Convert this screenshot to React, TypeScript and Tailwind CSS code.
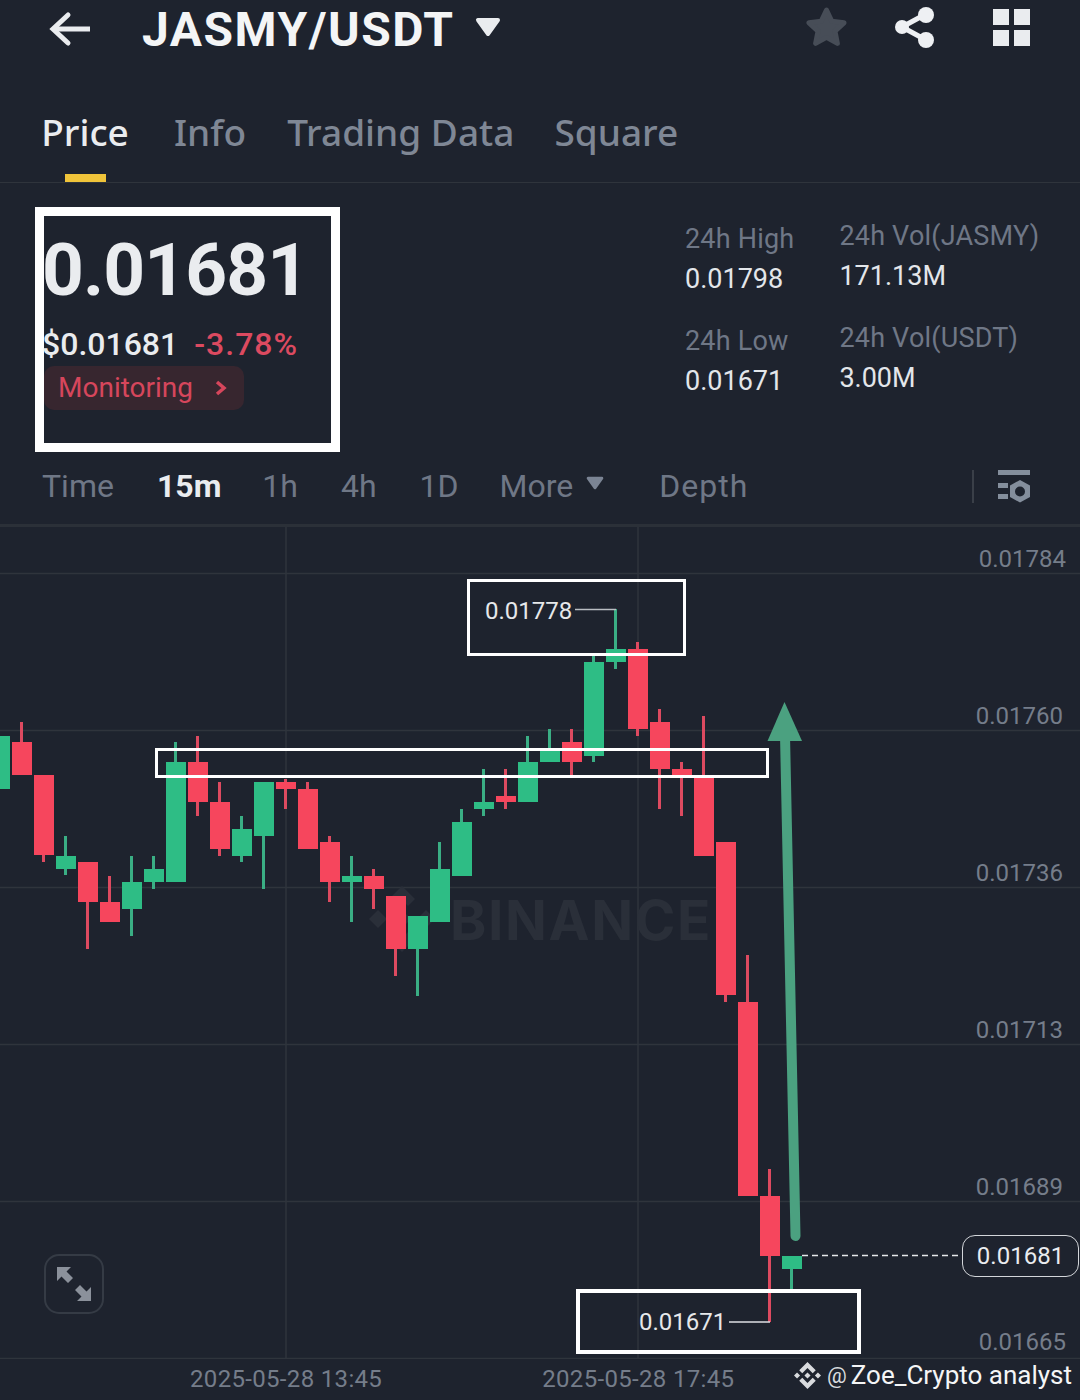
import React from 'react';
import { SiBinance } from 'react-icons/si';

type Candle = [number, number, number, number, number, 'g' | 'r'];

// x, wick top, body top, body bottom, wick bottom, colour (page pixels)
const candles: Candle[] = [
  [0, 736, 736, 789, 789, 'g'],
  [22, 722, 742, 775, 775, 'r'],
  [44, 775, 775, 855, 862, 'r'],
  [66, 836, 856, 869, 875, 'g'],
  [88, 862, 862, 902, 949, 'r'],
  [110, 876, 902, 922, 922, 'r'],
  [132, 856, 882, 909, 936, 'g'],
  [154, 856, 869, 882, 889, 'g'],
  [176, 742, 762, 882, 882, 'g'],
  [198, 736, 762, 802, 816, 'r'],
  [220, 782, 802, 849, 856, 'r'],
  [242, 816, 829, 856, 862, 'g'],
  [264, 782, 782, 836, 889, 'g'],
  [286, 779, 782, 789, 809, 'r'],
  [308, 782, 789, 849, 849, 'r'],
  [330, 836, 842, 882, 902, 'r'],
  [352, 856, 876, 882, 922, 'g'],
  [374, 869, 876, 889, 909, 'r'],
  [396, 896, 896, 949, 976, 'r'],
  [418, 916, 916, 949, 996, 'g'],
  [440, 842, 869, 922, 922, 'g'],
  [462, 809, 822, 876, 876, 'g'],
  [484, 769, 802, 809, 816, 'g'],
  [506, 769, 796, 802, 809, 'r'],
  [528, 736, 762, 802, 802, 'g'],
  [550, 729, 749, 762, 762, 'g'],
  [572, 729, 742, 762, 776, 'r'],
  [594, 656, 662, 756, 762, 'g'],
  [616, 609, 649, 662, 669, 'g'],
  [638, 642, 649, 729, 736, 'r'],
  [660, 709, 722, 769, 809, 'r'],
  [682, 762, 769, 776, 816, 'r'],
  [704, 716, 776, 856, 856, 'r'],
  [726, 842, 842, 995, 1002, 'r'],
  [748, 955, 1002, 1196, 1196, 'r'],
  [770, 1169, 1196, 1256, 1322, 'r'],
  [792, 1256, 1256, 1269, 1289, 'g'],
];

const gridY = [573, 730, 887, 1044, 1201, 1358];
const axisLabels = ['0.01784', '0.01760', '0.01736', '0.01713', '0.01689', '0.01665'];

const roboto = { fontFamily: 'Roboto, "Noto Sans", sans-serif' };

const Caret = ({ w, h, color }: { w: number; h: number; color: string }) => (
  <svg width={w} height={h} viewBox="0 0 26 20">
    <path d="M3 3 H23 L13 17 Z" fill={color} stroke={color} strokeWidth="4" strokeLinejoin="round" />
  </svg>
);

const Header = () => (
  <div className="flex h-[60px] items-center pl-[48px] pr-[50px]">
    <svg width="43" height="36" viewBox="0 0 43 36" className="mb-[2px] mr-[51px]" fill="none" stroke="#eaecef" strokeWidth="5">
      <path d="M42 18 H6" />
      <path d="M20 4 L5 18 L20 32" strokeLinecap="round" />
    </svg>
    <span className="text-[48px] font-bold tracking-[1.5px] text-[#f4f5f6]">JASMY/USDT</span>
    <span className="mb-[6px] ml-[20px] flex">
      <Caret w={26} h={20} color="#eaecef" />
    </span>
    <svg width="41" height="41" viewBox="0 0 41 41" className="mb-[5px] ml-auto">
      <path
        d="M20.5 3 L25.8 14.2 L38 15.8 L29 24.2 L31.4 36.4 L20.5 30.4 L9.6 36.4 L12 24.2 L3 15.8 L15.2 14.2 Z"
        fill="#474d57"
        stroke="#474d57"
        strokeWidth="5"
        strokeLinejoin="round"
      />
    </svg>
    <svg width="40" height="42" viewBox="0 0 40 42" className="mb-[6px] ml-[48px]" fill="#eef0f3">
      <path d="M7 21 L31 8 M7 21 L31 34" stroke="#eef0f3" strokeWidth="5" />
      <circle cx="7" cy="21" r="7" />
      <circle cx="31" cy="9" r="8" />
      <circle cx="31" cy="34" r="8" />
    </svg>
    <svg width="37" height="37" viewBox="0 0 37 37" className="mb-[6px] ml-[58px]" fill="#eaecef">
      <rect x="0" y="0" width="16" height="16" />
      <rect x="21" y="0" width="16" height="16" />
      <rect x="0" y="21" width="16" height="16" />
      <rect x="21" y="21" width="16" height="16" />
    </svg>
  </div>
);

const Tabs = () => (
  <div className="mt-[40px] flex h-[83px] border-b border-[#2f343c] pl-[41px] font-['Noto_Sans'] text-[37px] leading-[64px] font-medium text-[#7f8795]">
    <div className="flex w-[88px] flex-col items-center">
      <span className="h-[74px] text-[#eaecef]">Price</span>
      <div className="h-[8px] w-[41px] bg-[#f0c43a]" />
    </div>
    <span className="ml-[45px]">Info</span>
    <span className="ml-[41px]">Trading Data</span>
    <span className="ml-[40px]">Square</span>
  </div>
);

const StatColumn = ({ rows }: { rows: [string, string][] }) => (
  <div className="flex flex-col gap-[23px]">
    {rows.map(([label, value]) => (
      <div key={label} className="flex flex-col">
        <span className="h-[40px] text-[27px] leading-[40px] tracking-[0.2px] text-[#6f7786]">{label}</span>
        <span className="h-[39px] text-[27px] leading-[40px] text-[#e3e6ea]">{value}</span>
      </div>
    ))}
  </div>
);

const Stats = () => (
  <div className="flex h-[269px] pt-[24px]">
    <div className="ml-[35px] h-[245px] w-[305px] border-[9px] border-white">
      <div className="-ml-[2px] mt-[9px] text-[73px] leading-[90px] font-bold tracking-[-0.9px] text-[#eaecef]">0.01681</div>
      <div className="-ml-[2px] mt-[8px] flex gap-[16px] leading-[42px]">
        <span className="text-[32px] font-medium text-[#eaecef]">$0.01681</span>
        <span className="text-[32px] font-medium tracking-[1px] text-[#dc4a60]">-3.78%</span>
      </div>
      <div className="mt-[1px] flex h-[44px] w-[200px] items-center rounded-[10px] bg-[#37262f] pl-[14px] text-[28px] text-[#d6465c]">
        <span>Monitoring</span>
        <svg width="12" height="16" viewBox="0 0 12 16" className="ml-[22px]" fill="none" stroke="#d6465c" strokeWidth="3.5">
          <path d="M2 2 L9 8 L2 14" />
        </svg>
      </div>
    </div>
    <div className="ml-[345px] pt-[12px]">
      <StatColumn rows={[['24h High', '0.01798'], ['24h Low', '0.01671']]} />
    </div>
    <div className="ml-[45px] pt-[9px]">
      <StatColumn rows={[['24h Vol(JASMY)', '171.13M'], ['24h Vol(USDT)', '3.00M']]} />
    </div>
  </div>
);

const TimeRow = () => (
  <div className="flex h-[75px] items-center border-b-[3px] border-[#2b3038] pb-[4px] pl-[42px] text-[32px] text-[#6f7786]">
    <span>Time</span>
    <span className="ml-[43px] font-bold text-[#eaecef]">15m</span>
    <span className="ml-[41px]">1h</span>
    <span className="ml-[43px]">4h</span>
    <span className="ml-[43px]">1D</span>
    <span className="ml-[41px]">More</span>
    <span className="mb-[6px] ml-[13px] flex">
      <Caret w={18} h={14} color="#7b8494" />
    </span>
    <span className="ml-[55px] tracking-[1px]">Depth</span>
    <div className="ml-auto h-[33px] w-[2px] bg-[#3a3f48]" />
    <svg width="34" height="34" viewBox="0 0 34 34" className="ml-[23px] mr-[49px]" fill="#848e9c">
      <rect x="1" y="1" width="32" height="5" />
      <rect x="1" y="14" width="10" height="5" />
      <rect x="1" y="25" width="10" height="5" />
      <path fillRule="evenodd" d="M23 11 L33 16.5 V28 L23 33.5 L13 28 V16.5 Z M23 17.5 A5 5 0 1 0 23 27.5 A5 5 0 1 0 23 17.5 Z" />
    </svg>
  </div>
);

const ChartDrawing = () => (
  <svg className="absolute inset-0" width="1080" height="832" viewBox="0 527 1080 832">
    {gridY.map((y) => (
      <line key={y} x1="0" x2="1080" y1={y + 0.5} y2={y + 0.5} stroke="#2f343c" strokeWidth="1.5" />
    ))}
    <line x1="286" x2="286" y1="527" y2="1358" stroke="#2f343c" strokeWidth="1.5" />
    <line x1="638" x2="638" y1="527" y2="1358" stroke="#2f343c" strokeWidth="1.5" />

    <text x="450" y="940" fontFamily="Inter, sans-serif" fontWeight="700" fontSize="55" letterSpacing="1.6" fill="#2a2f39">
      BINANCE
    </text>
    <g fill="#2a2f39">
      <path d="M402 886 L415 899 L408 906 L402 900 L396 906 L389 899 Z" />
      <path d="M378 910 L387 919 L378 928 L369 919 Z" />
      <path d="M426 910 L435 919 L426 928 L417 919 Z" />
      <path d="M402 910 L411 919 L402 928 L393 919 Z" />
      <path d="M396 932 L402 938 L408 932 L415 939 L402 952 L389 939 Z" />
    </g>

    {candles.map(([x, high, top, bottom, low, c]) => {
      const color = c === 'g' ? '#2ebd85' : '#f6465d';
      return (
        <g key={x}>
          <rect x={x - 2} y={high} width="3" height={low - high} fill={c === 'g' ? '#3aae84' : '#dd4a60'} />
          <rect x={x - 10} y={top} width="20" height={bottom - top} fill={color} />
        </g>
      );
    })}

    <path d="M575 609.5 H616" stroke="#b9bdc2" strokeWidth="1.5" />
    <path d="M729 1322 H770" stroke="#dfe1e4" strokeWidth="1.5" />
    <path d="M802 1255.5 H962" stroke="#e6e8ea" strokeWidth="1.5" strokeDasharray="6 4" />

    <path d="M785 735 L795.5 1236" stroke="#4ba180" strokeWidth="10" strokeLinecap="round" />
    <path d="M784.5 702 L802 741 L767.5 741 Z" fill="#4ba180" />
  </svg>
);

const ExpandButton = () => (
  <div className="absolute left-[44px] top-[727px] flex h-[60px] w-[60px] items-center justify-center rounded-[15px] border-2 border-[#353b45]">
    <svg width="36" height="36" viewBox="0 0 36 36" fill="#8b919b">
      <path d="M1 1 H15 L10.5 5.5 L17 12 L12 17 L5.5 10.5 L1 15 Z" />
      <path d="M35 35 H21 L25.5 30.5 L19 24 L24 19 L30.5 25.5 L35 21 Z" />
    </svg>
  </div>
);

const Chart = () => (
  <div className="relative h-[831px]">
    <ChartDrawing />

    <div className="absolute right-[14px] top-[1px] flex flex-col items-end text-[24px] leading-[28px] text-[#757d8a]">
      {axisLabels.map((label, i) => (
        <div key={label} className={`flex items-end ${i === 0 ? 'h-[45px]' : i === 5 ? 'h-[155px]' : 'h-[157px] pr-[3px]'}`}>
          <span>{label}</span>
        </div>
      ))}
    </div>

    <div className="absolute left-[467px] top-[52px] flex h-[77px] w-[219px] border-[3px] border-white pl-[15px] pt-[15px] text-[24px] leading-[28px] text-[#e6e8ea]">
      0.01778
    </div>
    <div className="absolute left-[155px] top-[221px] h-[30px] w-[614px] border-[3.5px] border-white" />
    <div className="absolute left-[576px] top-[762px] flex h-[65px] w-[285px] border-[4px] border-white pl-[59px] pt-[15px] text-[24px] leading-[28px] text-[#e6e8ea]">
      0.01671
    </div>
    <div className="absolute left-[962px] top-[708px] flex h-[42px] w-[117px] items-center justify-center rounded-[13px] border border-[#d3d6da] bg-[#1e232e] text-[24px] text-[#eaecef]">
      0.01681
    </div>
    <ExpandButton />
  </div>
);

const Footer = () => (
  <div className="flex h-[41px] items-center text-[24px] tracking-[0.33px] text-[#757d8a]">
    <span className="ml-[190px]">2025-05-28 13:45</span>
    <span className="ml-[160px]">2025-05-28 17:45</span>
    <div className="mb-[6px] ml-auto mr-[8px] flex items-center tracking-normal text-[#f4f5f6]">
      <SiBinance size={27} color="#d9dbde" />
      <span className="ml-[6px] text-[22px] text-[#d9dbde]">@</span>
      <span className="ml-[4px] text-[26px]">Zoe_Crypto analyst</span>
    </div>
  </div>
);

export default function App() {
  return (
    <div className="h-[1400px] w-[1080px] overflow-hidden bg-[#1e232e]" style={roboto}>
      <Header />
      <Tabs />
      <Stats />
      <TimeRow />
      <Chart />
      <Footer />
    </div>
  );
}
